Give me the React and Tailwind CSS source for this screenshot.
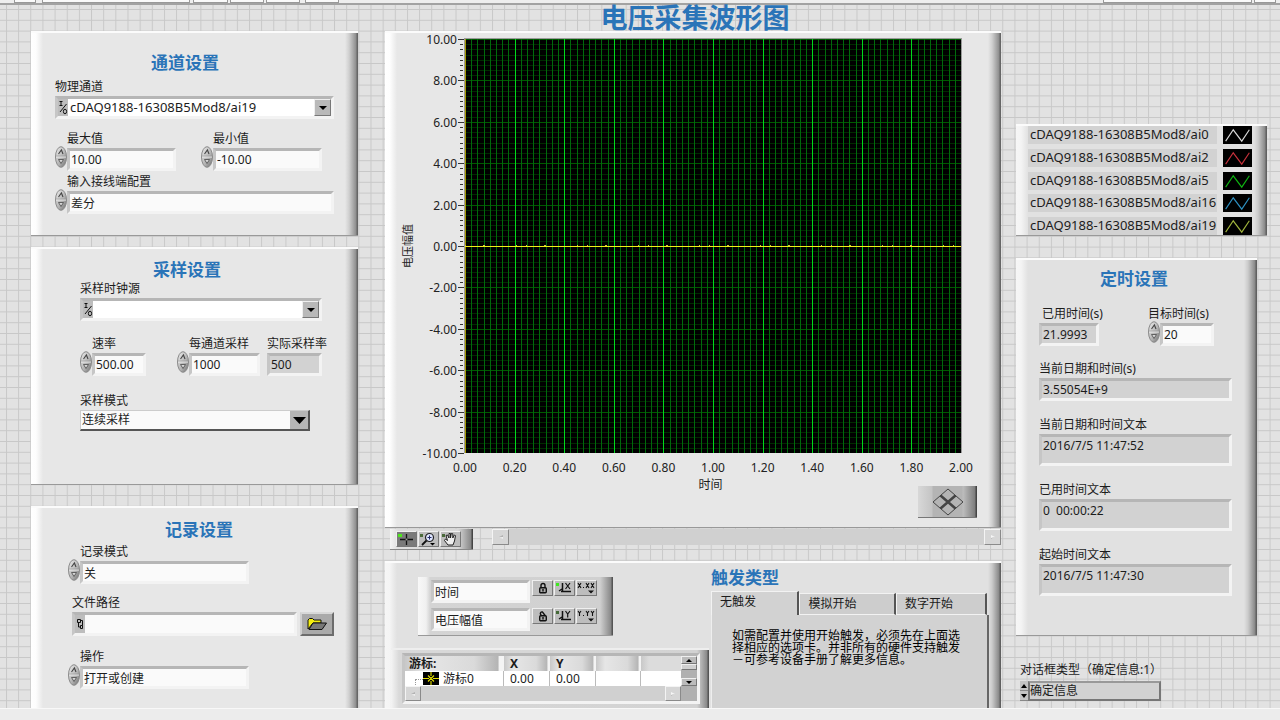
import React, { useId } from 'react';

const PANEL_LIGHT =
  'bg-[linear-gradient(to_right,#fff_0px,#fdfdfd_5px,#e7e7e7_12px,#e7e7e7_calc(100%-13px),#d0d0d0_calc(100%-9px),#8e8e8e_calc(100%-2px),#666_calc(100%-1px))]';
const PANEL_DIM =
  'bg-[linear-gradient(to_right,#f6f6f6_0px,#f4f4f4_5px,#e1e1e1_12px,#e1e1e1_calc(100%-13px),#cbcbcb_calc(100%-9px),#888_calc(100%-2px),#606060_calc(100%-1px))]';
const SUNKEN = 'border-3 border-t-[#b6b6b6] border-l-[#c6c6c6] border-r-[#f3f3f3] border-b-[#f3f3f3]';
const RAISED = 'border border-t-[#efefef] border-l-[#efefef] border-r-[#777] border-b-[#777]';

function Panel({ tone = PANEL_LIGHT, open = false, className = '', children }) {
  return (
    <section className={`border-t-2 border-t-[#fbfbfb] ${open ? '' : 'border-b border-b-[#999]'} ${tone} ${className}`}>
      {children}
    </section>
  );
}

function Title({ className = '', children }) {
  return <h2 className={`text-[17px] leading-5 font-bold text-[#2a74b8] whitespace-nowrap ${className}`}>{children}</h2>;
}

function Spinner({ label }) {
  return (
    <button type="button" aria-label={label} className="h-[22px] w-3 shrink-0 -mt-0.5">
      <svg viewBox="0 0 12 22" className="block h-full w-full">
        <defs>
          <linearGradient id="spin" x1="0" x2="1" y1="0" y2="1">
            <stop offset="0" stopColor="#f0f0f0" />
            <stop offset="0.6" stopColor="#b0b0b0" />
            <stop offset="1" stopColor="#6a6a6a" />
          </linearGradient>
        </defs>
        <ellipse cx="6" cy="11" rx="5.5" ry="10.3" fill="url(#spin)" stroke="#8a8a8a" />
        <path d="M1 11h10" stroke="#ececec" />
        <path d="M1 10h10" stroke="#999" strokeWidth=".6" />
        <path d="M3.5 8L6.4 4l1.6 4" fill="none" stroke="#444" strokeWidth="1.1" />
        <path d="M3.5 13.5h5L6 17.5z" fill="#d8d8d8" stroke="#555" strokeWidth=".9" />
      </svg>
    </button>
  );
}

function Field({ label, value, spin, readOnly, multi, labelClass = '', className = '' }) {
  const id = useId();
  const fill = readOnly ? 'bg-[#d2d2d2]' : 'bg-[#fafafa]';
  const pad = spin ? 'pl-3' : '';
  return (
    <div className={`flex flex-col gap-px ${className}`}>
      <label htmlFor={id} className={`leading-4 whitespace-nowrap ${pad} ${labelClass}`}>{label}</label>
      <div className="flex">
        {spin && <Spinner label={`${label} 增减`} />}
        {multi ? (
          <textarea id={id} readOnly defaultValue={value} rows={1} className={`h-8 w-full min-w-0 resize-none overflow-hidden px-px leading-[17px] outline-none block ${SUNKEN} ${fill}`} />
        ) : (
          <input id={id} readOnly={readOnly} defaultValue={value} className={`h-[23px] w-full min-w-0 px-px leading-[17px] outline-none ${SUNKEN} ${fill}`} />
        )}
      </div>
    </div>
  );
}

function IoSelect({ label, value, className = '' }) {
  const id = useId();
  return (
    <div className={`flex flex-col gap-px ${className}`}>
      <label htmlFor={id} className="leading-4">{label}</label>
      <div className={`relative flex h-[23px] bg-white ${SUNKEN}`}>
        <svg viewBox="0 0 10 17" className="h-[17px] w-[10px] shrink-0 bg-[#bdbdbd]">
          <path d="M1.5 2.5h3M3 2.500v4M1.500 6.500h3M8.500 5L2 13" fill="none" stroke="#111" />
          <ellipse cx="7" cy="12.5" rx="1.6" ry="2.3" fill="none" stroke="#111" />
        </svg>
        <select id={id} defaultValue={value} className="min-w-0 flex-1 appearance-none bg-white pl-0.5 pr-5 text-[13px] leading-[17px] outline-none">
          <option>{value}</option>
        </select>
        <span className={`pointer-events-none absolute right-0 top-0 flex h-[17px] w-[17px] items-center justify-center bg-[#b9b9b9] ${RAISED}`}>
          <svg viewBox="0 0 8 4" className="h-1 w-2"><path d="M0 0h8L4 4z" fill="#000" /></svg>
        </span>
      </div>
    </div>
  );
}

const range = (n) => Array.from({ length: n }, (_, i) => i);

function Chart() {
  const L = 80, T = 6, W = 496, H = 414;
  return (
    <svg viewBox="0 0 616 443" className="block w-full overflow-visible" role="img" aria-label="电压采集波形图">
      <g shapeRendering="crispEdges">
        <rect x={L - 1} y={T - 1} width={W + 2} height={H + 1} fill="#9a9a9a" />
        <rect x={L} y={T} width={W} height={H} fill="#000" />
        {range(80).map((i) => (
          <rect key={i} x={L} y={Math.round(T + (i * H) / 80)} width={W} height="1" fill={i % 8 ? '#002a00' : '#005800'} />
        ))}
        {range(80).map((i) => (
          <rect key={i} x={Math.round(L + (i * W) / 80)} y={T} width="1" height={H} fill={i % 8 ? '#006a0c' : '#00d81c'} />
        ))}
        {range(81).map((i) => (
          <rect key={i} x={i % 8 ? 75 : 73} y={Math.round(T + (i * H) / 80)} width={i % 8 ? 3 : 6} height="1" fill="#333" />
        ))}
        <rect x={L} y={T} width="1" height={H} fill="#a89a00" />
        <rect x={L} y={T + H / 2} width={W} height="1" fill="#f2ee18" />
        <path d={`M${L} ${T + H / 2 - 0.5}h${W}`} stroke="#c9c640" strokeDasharray="1 17 2 31 1 9" />
      </g>
      <g fill="#222" fontSize="12">
        {range(11).map((i) => (
          <text key={i} x="72" y={T + (i * H) / 10 + 5} textAnchor="end">{(10 - 2 * i).toFixed(2)}</text>
        ))}
        {range(11).map((i) => (
          <text key={i} x={L + (i * W) / 10} y="439" textAnchor="middle">{(i * 0.2).toFixed(2)}</text>
        ))}
        <text transform="translate(27 213) rotate(-90)" textAnchor="middle" fontSize="11">电压幅值</text>
      </g>
    </svg>
  );
}

function ToolButton({ label, children, className = 'bg-[#bdbdbd]' }) {
  return (
    <button type="button" aria-label={label} className={`flex h-4 w-[21px] items-center justify-center ${RAISED} ${className}`}>
      {children}
    </button>
  );
}

function AxisRow({ name, axis, closed }) {
  const x = axis === 'X';
  return (
    <div className="flex gap-px">
      <input aria-label={`${axis} 轴名称`} defaultValue={name} className={`mr-px h-[23px] w-[99px] bg-[#fafafa] px-px outline-none ${SUNKEN}`} />
      <ToolButton label={`${axis} 轴锁定`}>
        <svg viewBox="0 0 10 12" className="h-3 w-[10px]">
          <path d={closed ? 'M3 6V3.5a2 2 0 014 0V6' : 'M7.5 6L4.5 2a1.6 1.6 0 00-2 2.2L3.5 6'} fill="none" stroke="#111" strokeWidth="1.4" />
          <rect x="1.7" y="5.7" width="6.6" height="5" rx="1" fill="#aaa" stroke="#111" strokeWidth="1.4" />
          <path d="M5 7v2.4" stroke="#111" strokeWidth="1.4" />
        </svg>
      </ToolButton>
      <ToolButton label={`${axis} 轴自动缩放`}>
        <svg viewBox="0 0 19 14" className="h-[14px] w-[19px]">
          <rect x="1" y="2" width="3" height="3" fill={closed ? '#3ee820' : '#456a38'} />
          <path d="M4 10l3-2M7.500 2v9M6 10.500h10" fill="none" stroke="#111" strokeWidth="1.500" />
          <path d={x ? 'M10.500 2l4.500 6M15 2l-4.500 6' : 'M10.500 2l2.200 3L15 2M12.700 5v3.500'} fill="none" stroke="#111" strokeWidth="1.200" />
        </svg>
      </ToolButton>
      <ToolButton label={`${axis} 轴格式`}>
        <svg viewBox="0 0 19 14" className="h-[14px] w-[19px]">
          <path
            d={x ? 'M1 2l3 5M4 2L1 7M9 2l3 5M12 2L9 7M14 2l3 5M17 2l-3 5' : 'M1 2l1.500 2L4 2M2.500 4v3M9 2l1.500 2L12 2M10.500 4v3M14 2l1.500 2L17 2M15.500 4v3'}
            fill="none" stroke="#111" strokeWidth="1.1"
          />
          <path d="M6 6h1v1H6zM11 9.500h6l-3 3z" fill="#111" />
        </svg>
      </ToolButton>
    </div>
  );
}

function ScrollArrow({ left, label, className = '' }) {
  return (
    <button type="button" aria-label={label} className={`flex shrink-0 items-center justify-center border border-t-[#f4f4f4] border-l-[#f4f4f4] border-r-[#8a8a8a] border-b-[#8a8a8a] bg-[#d6d6d6] ${className}`}>
      <svg viewBox="0 0 6 6" className="h-1.5 w-1.5">
        <path d={left ? 'M5 1v4L1 3z' : 'M1 1v4l4-2z'} fill={left ? '#b2b2b2' : '#f6f6f6'} />
        <path d={left ? 'M5 3v2L1 3.500z' : 'M1 4v1l4-2z'} fill={left ? '#f4f4f4' : '#b2b2b2'} />
      </svg>
    </button>
  );
}

const HEAD = 'bg-[linear-gradient(to_right,#c8c8c8,#e6e6e6_20%,#dadada_70%,#b4b4b4_94%,#f4f4f4_95%)]';

function CursorTable() {
  return (
    <div className="mt-3 ml-1.5 flex-1 border-t-2 border-t-[#eee] bg-[linear-gradient(to_right,#f4f4f4_0px,#d9d9d9_8px,#d2d2d2_calc(100%-12px),#888_calc(100%-2px),#555_calc(100%-1px))] pt-[3px] pr-[9px] pl-[11px] pb-1">
      <div className={`flex bg-[#c9c9c9] ${SUNKEN}`}>
        <div className="min-w-0 flex-1">
          <table className="w-full table-fixed border-separate border-spacing-0">
            <thead className="text-left leading-[15px]">
              <tr>
                <th className={`w-[99px] p-0 pl-1 ${HEAD}`}>游标:</th>
                <th className={`w-[46px] p-0 pl-1.5 ${HEAD}`}>X</th>
                <th className={`w-[46px] p-0 pl-1.5 ${HEAD}`}>Y</th>
                <th className={`w-[45px] p-0 ${HEAD}`}></th>
                <th className="bg-[linear-gradient(to_right,#c8c8c8,#dcdcdc_20%)] p-0"></th>
              </tr>
            </thead>
            <tbody className="bg-white leading-[15px]">
              <tr>
                <td className="border-r border-[#bbb] p-0">
                  <span className="flex h-[15px] items-center overflow-hidden">
                    <span className="ml-2.5 mt-2 h-2 w-2 border-t border-l border-dotted border-[#999]" />
                    <svg viewBox="0 0 16 13" className="h-[13px] w-4 bg-black">
                      <path d="M0 6.500h6M10 6.500h6M8 0v4M8 9v4M5 3.500l6 6M11 3.500l-6 6" stroke="#e4e000" strokeWidth="1.1" />
                    </svg>
                    <span className="ml-1">游标0</span>
                  </span>
                </td>
                <td className="border-r border-[#bbb] p-0 pl-1.5">0.00</td>
                <td className="border-r border-[#bbb] p-0 pl-1.5">0.00</td>
                <td className="border-r border-[#bbb] p-0"></td>
                <td className="p-0"></td>
              </tr>
            </tbody>
          </table>
          <div className="flex justify-between bg-[#d0d0d0]">
            <ScrollArrow left label="向左滚动" className="h-[15px] w-4" />
            <ScrollArrow label="向右滚动" className="h-[15px] w-4" />
          </div>
        </div>
        <div className="flex w-4 shrink-0 flex-col bg-[#b0b0b0]">
          <button type="button" aria-label="向上滚动" className={`flex h-2 items-center justify-center bg-[#bbb] ${RAISED}`}>
            <svg viewBox="0 0 6 3" className="h-[3px] w-1.5"><path d="M0 3h6L3 0z" /></svg>
          </button>
          <span className={`h-1.5 bg-[#d0d0d0] ${RAISED}`} />
          <button type="button" aria-label="向下滚动" className={`mt-2 flex h-2 items-center justify-center bg-[#bbb] ${RAISED}`}>
            <svg viewBox="0 0 6 3" className="h-[3px] w-1.5"><path d="M0 0h6L3 3z" /></svg>
          </button>
        </div>
      </div>
    </div>
  );
}

const CHANNELS = [
  ['cDAQ9188-16308B5Mod8/ai0', '#d8d8d8'],
  ['cDAQ9188-16308B5Mod8/ai2', '#c5313b'],
  ['cDAQ9188-16308B5Mod8/ai5', '#0fb512'],
  ['cDAQ9188-16308B5Mod8/ai16', '#2d8fc0'],
  ['cDAQ9188-16308B5Mod8/ai19', '#a0b43c'],
];

const EDGE = 'h-[3px] border-x border-b border-[#999] bg-[#fafafa]';

function TopEdge() {
  return (
    <div className="flex h-[5px] shrink-0 border-b-2 border-[#a2a2a2] bg-[#eee] pl-3.5">
      <span className={`${EDGE} w-[22px]`} />
      <span className={`${EDGE} ml-1.5 w-[148px]`} />
      <span className={`${EDGE} ml-[3px] w-[35px]`} />
      <span className={`${EDGE} ml-0.5 w-[34px]`} />
      <span className={`${EDGE} ml-0.5 w-[34px]`} />
      <span className={`${EDGE} ml-[5px] w-[34px]`} />
      <span className={`${EDGE} ml-auto w-[149px]`} />
      <span className={`${EDGE} ml-0.5 mr-1 w-[22px]`} />
    </div>
  );
}

export default function App() {
  const mode = useId();
  const dialog = useId();
  return (
    <div className="relative isolate flex min-h-screen flex-col bg-[#e2e2e2] text-xs text-[#1c1c1c] font-['Noto_Sans','Noto_Sans_CJK_SC',sans-serif]">
      <svg className="absolute inset-0 -z-10 h-full w-full" aria-hidden="true">
        <defs>
          <pattern id="grid" x="6" y="9" width="12.15" height="10.8" patternUnits="userSpaceOnUse">
            <path d="M0 .5h12.150M.5 0v10.800" stroke="#c8c8c8" fill="none" />
          </pattern>
        </defs>
        <rect width="100%" height="100%" fill="url(#grid)" />
      </svg>
      <TopEdge />

      <main className="flex flex-1 pl-[31px] pr-[13px]">
        <div className="flex min-w-0 flex-[327] flex-col pt-[26px]">
          <Panel className="px-6 pt-5 pb-[21px]">
            <Title className="pl-24">通道设置</Title>
            <IoSelect label="物理通道" value="cDAQ9188-16308B5Mod8/ai19" className="mt-1.5" />
            <div className="mt-3 flex gap-[25px]">
              <Field label="最大值" value="10.00" spin className="w-[121px]" />
              <Field label="最小值" value="-10.00" spin className="w-[121px]" />
            </div>
            <Field label="输入接线端配置" value="差分" spin className="mt-[3px]" />
          </Panel>

          <Panel className="mt-[11px] pt-[11px] pr-9 pb-[53px] pl-[49px]">
            <Title className="pl-[73px]">采样设置</Title>
            <IoSelect label="采样时钟源" value="" className="mt-px" />
            <div className="mt-[15px] flex">
              <Field label="速率" value="500.00" spin className="w-[66px]" />
              <Field label="每通道采样" value="1000" spin className="ml-[31px] w-[83px]" />
              <Field label="实际采样率" value="500" readOnly className="ml-[7px] w-[55px]" />
            </div>
            <div className="mt-[17px] flex w-[230px] flex-col gap-px">
              <label htmlFor={mode} className="leading-4">采样模式</label>
              <div className="relative flex h-[21px] border-r-2 border-b-2 border-l border-t border-[#555] border-t-[#ccc] border-l-[#ccc]">
                <select id={mode} className="min-w-0 flex-1 appearance-none bg-[#fafafa] pl-px outline-none">
                  <option>连续采样</option>
                </select>
                <span className="pointer-events-none absolute right-0 top-0 flex h-full w-[18px] items-center justify-center bg-[#b5b5b5]">
                  <svg viewBox="0 0 13 7" className="h-[7px] w-[13px]"><path d="M0 0h13L6.500 7z" /></svg>
                </span>
              </div>
            </div>
          </Panel>

          <Panel open className="mt-[21px] flex-1 pt-3 pr-6 pl-[37px]">
            <Title className="pl-[97px]">记录设置</Title>
            <Field label="记录模式" value="关" spin className="mt-1 w-[181px]" />
            <div className="mt-[11px] ml-1 flex items-end gap-[3px]">
              <div className="flex min-w-0 flex-1 flex-col gap-px">
                <label htmlFor="path" className="leading-4">文件路径</label>
                <div className={`flex h-6 bg-[#fafafa] ${SUNKEN}`}>
                  <svg viewBox="0 0 10 18" className="h-full w-[10px] shrink-0 bg-[#bdbdbd]">
                    <path d="M2.500 4.500h3v3h-3zM5.500 10.500h2v3h-2zM5.500 5.500h2v5M3.500 7.500v4.500h2" fill="none" stroke="#111" />
                  </svg>
                  <input id="path" className="min-w-0 flex-1 bg-transparent px-1 outline-none" />
                </div>
              </div>
              <button type="button" aria-label="浏览" className="flex h-6 w-[34px] items-center justify-center border-2 border-t-[#d8d8d8] border-l-[#cfcfcf] border-r-[#6c6c6c] border-b-[#6c6c6c] bg-[#aaa]">
                <svg viewBox="0 0 20 12" className="h-3 w-5">
                  <path d="M1 11V2l1.500-1.500h3L7 2h7v3H6L1 11z" fill="#f4ee10" stroke="#111" />
                  <path d="M2 11.500L6 5h13.500L15 11.500z" fill="#777" stroke="#111" />
                </svg>
              </button>
            </div>
            <Field label="操作" value="打开或创建" spin className="mt-[13px] w-[181px]" />
          </Panel>
        </div>

        <div className="ml-[27px] flex min-w-0 flex-[616] flex-col">
          <h1 className="pl-1 text-center text-[27px] leading-[26px] font-bold text-[#2a74b8]">电压采集波形图</h1>
          <Panel>
            <Chart />
            <div className="flex items-start pr-6 pb-[9px]">
              <span className="w-full pl-[118px] pt-px text-center leading-4">时间</span>
              <button type="button" aria-label="平移" className="mt-[10px] flex h-8 w-[59px] shrink-0 items-center justify-center border-b border-[#777] bg-[linear-gradient(to_right,#d8d8d8,#c4c4c4_14px,#b4b4b4_15px,#b4b4b4_44px,#bdbdbd_45px,#7d7d7d_57px,#444_58px)]">
                <svg viewBox="0 0 32 28" className="h-7 w-8" fill="none" stroke="#444">
                  <path d="M16 1l15 13-15 13L1 14z" />
                  <path d="M8.500 7.500l15 13M23.500 7.500l-15 13" strokeWidth="2.500" />
                </svg>
              </button>
            </div>
          </Panel>
          <div className="flex h-[33px] items-start pt-px">
            <div className="ml-[5px] flex h-[21px] w-[83px] items-center gap-px border-b border-[#888] bg-[linear-gradient(to_right,#f4f4f4_0px,#dedede_8px,#d8d8d8_68px,#888_81px,#444_82px)] pl-1.5">
              <ToolButton label="游标工具" className="bg-[#7a7a7a]">
                <svg viewBox="0 0 19 14" className="h-[14px] w-[19px]">
                  <rect x="1" y="2" width="4" height="3" fill="#4ee61c" />
                  <path d="M3 7.500h13M9.500 2v11" stroke="#111" strokeWidth="1.300" />
                  <circle cx="9.500" cy="7.500" r="1" fill="#999" />
                </svg>
              </ToolButton>
              <ToolButton label="缩放工具">
                <svg viewBox="0 0 19 14" className="h-[14px] w-[19px]">
                  <rect x="1" y="2" width="3" height="3" fill="#4a6a3a" />
                  <path d="M8 8l-5 5" stroke="#111" strokeWidth="1.800" />
                  <circle cx="10.500" cy="5.500" r="4" fill="#dfe6ff" stroke="#222" strokeWidth="1.200" />
                  <path d="M8.500 5.500h4M10.500 3.500v4" stroke="#222a66" />
                  <path d="M11 11h5l-2.500 2.500z" />
                </svg>
              </ToolButton>
              <ToolButton label="平移工具">
                <svg viewBox="0 0 19 14" className="h-[14px] w-[19px]">
                  <rect x="1" y="2" width="3" height="3" fill="#4a6a3a" />
                  <path d="M7 13L3.500 8.500 4.500 7l2 1.500L5 3.500l1.500-.5L8 6V1.500h1.500V6l.8-4.500 1.500.2V6l1.500-3 1.200.6L13.500 9 12 13z" fill="#eee" stroke="#222" />
                </svg>
              </ToolButton>
            </div>
            <div className="ml-[19px] flex h-4 flex-1 justify-between bg-[#d0d0d0]">
              <ScrollArrow left label="图表向左滚动" className="w-[17px]" />
              <ScrollArrow label="图表向右滚动" className="w-[17px]" />
            </div>
          </div>

          <Panel open tone={PANEL_DIM} className="flex flex-1 pr-3">
            <div className="flex w-[324px] shrink-0 flex-col">
              <div className="mt-[14px] ml-[33px] flex w-[195px] flex-col gap-[5px] border-b border-[#999] bg-[linear-gradient(to_right,#f8f8f8_0px,#f0f0f0_8px,#d4d4d4_12px,#d0d0d0_182px,#888_193px,#555_194px)] pt-[3px] pl-[13px] pb-1">
                <AxisRow name="时间" axis="X" closed />
                <AxisRow name="电压幅值" axis="Y" />
              </div>
              <CursorTable />
            </div>
            <div className="ml-0.5 flex min-w-0 flex-1 flex-col">
              <Title className="mt-[5px]">触发类型</Title>
              <div role="tablist" className="mt-[3px] flex items-end pr-0.5 leading-4">
                <button type="button" role="tab" aria-selected="true" className="h-6 flex-[87] border-t border-l border-[#f2f2f2] border-r-2 border-r-[#555] bg-[#d2d2d2] pb-1 pl-2 text-left">无触发</button>
                <button type="button" role="tab" aria-selected="false" className="h-[22px] flex-[96] border-t border-b border-l border-[#f2f2f2] border-r-2 border-r-[#555] bg-[#cdcdcd] pl-2 text-left">模拟开始</button>
                <button type="button" role="tab" aria-selected="false" className="h-[22px] flex-[90] border-t border-b border-l border-[#f2f2f2] border-r-2 border-r-[#555] bg-[#cdcdcd] pl-2 text-left">数字开始</button>
              </div>
              <div role="tabpanel" className="flex-1 border-r-2 border-l border-r-[#666] border-l-[#eee] bg-[#d2d2d2] pt-[15px] pl-5">
                <p className="leading-3 text-black whitespace-nowrap">
                  如需配置并使用开始触发，必须先在上面选<br />
                  择相应的选项卡。并非所有的硬件支持触发<br />
                  －可参考设备手册了解更多信息。
                </p>
              </div>
            </div>
          </Panel>
        </div>

        <div className="ml-[15px] flex min-w-0 flex-[251] flex-col pt-[119px]">
          <Panel tone={PANEL_DIM} className="pr-[15px] pl-3">
            <ul className="flex h-[109px] flex-col justify-between">
              {CHANNELS.map(([name, color]) => (
                <li key={name} className="flex items-center justify-between">
                  <span className="h-[18px] w-[189px] bg-[#d2d2d2] pl-0.5 text-[13px] leading-4 whitespace-nowrap">{name}</span>
                  <svg viewBox="0 0 29 19" className="h-[18px] w-[29px] bg-black">
                    <path d="M2 16L10 4l9 12 8-12" fill="none" stroke={color} strokeWidth="1.200" />
                  </svg>
                </li>
              ))}
            </ul>
          </Panel>

          <Panel tone={PANEL_DIM} className="mt-[22px] mr-[10px] pr-[25px] pl-[23px] pt-[9px] pb-[39px]">
            <Title className="pl-[61px]">定时设置</Title>
            <div className="mt-[17px] flex gap-[49px]">
              <Field label="已用时间(s)" value="21.9993" readOnly labelClass="pl-[3px]" className="w-[60px]" />
              <div className="w-[66px]">
                <Field label="目标时间(s)" value="20" spin labelClass="-ml-3" />
              </div>
            </div>
            <Field label="当前日期和时间(s)" value="3.55054E+9" readOnly className="mt-[15px]" />
            <Field label="当前日期和时间文本" value="2016/7/5 11:47:52" readOnly multi className="mt-4" />
            <Field label="已用时间文本" value="0  00:00:22" readOnly multi className="mt-4" />
            <Field label="起始时间文本" value="2016/7/5 11:47:30" readOnly multi className="mt-4" />
          </Panel>

          <div className="mt-[26px] ml-1 flex w-[141px] flex-col gap-[3px]">
            <label htmlFor={dialog} className="leading-4 whitespace-nowrap">对话框类型（确定信息:1）</label>
            <div className="flex h-5">
              <div className="flex w-2 flex-col">
                <button type="button" aria-label="上一项" className="flex h-2.5 items-center justify-center border-b border-[#888] bg-[#c4c4c4]">
                  <svg viewBox="0 0 6 4" className="h-1 w-1.5"><path d="M0 4h6L3 0z" /></svg>
                </button>
                <button type="button" aria-label="下一项" className="flex h-2.5 items-center justify-center border-b border-[#888] bg-[#c4c4c4]">
                  <svg viewBox="0 0 6 4" className="h-1 w-1.5"><path d="M0 0h6L3 4z" /></svg>
                </button>
              </div>
              <select id={dialog} className="min-w-0 flex-1 appearance-none border-2 border-t-[#999] border-l-[#777] border-r-[#777] border-b-[#777] bg-[#d2d2d2] leading-4 outline-none">
                <option>确定信息</option>
              </select>
            </div>
          </div>
        </div>
      </main>
      <div className="h-3 shrink-0 border-t border-[#f8f8f8] bg-[#ececec]" />
    </div>
  );
}
